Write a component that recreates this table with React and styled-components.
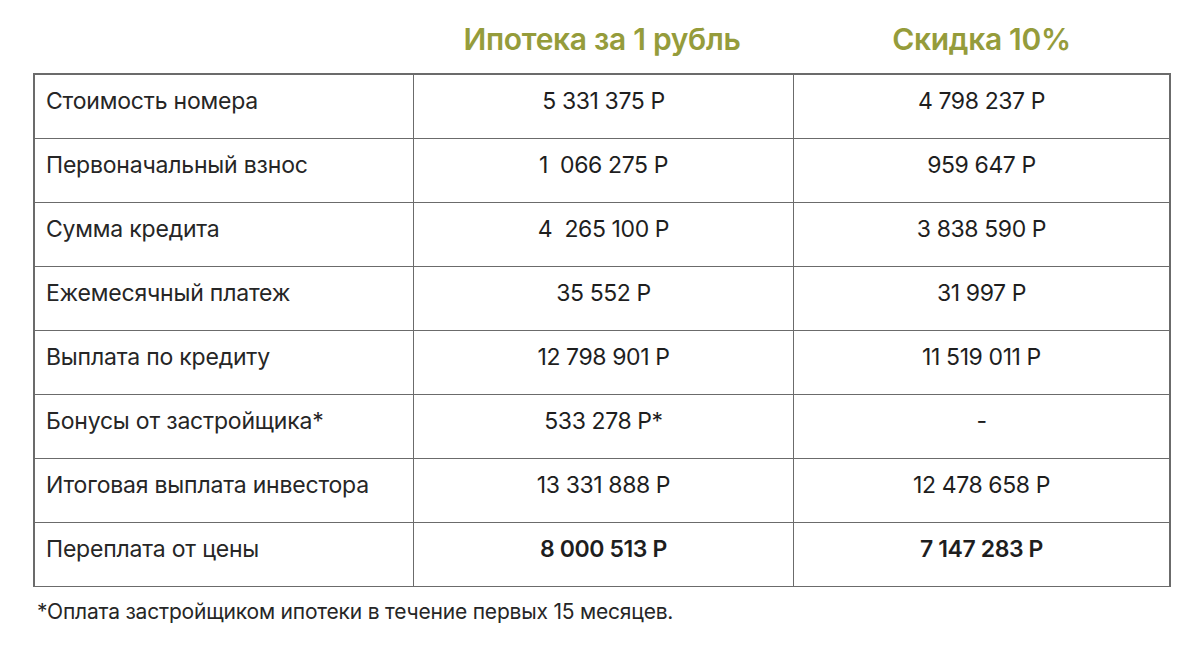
import React from "react";
import styled, { createGlobalStyle } from "styled-components";

const GlobalStyle = createGlobalStyle`
  body {
    margin: 0;
    background: #ffffff;
    font-family: "Inter", "Noto Sans", sans-serif;
    color: #2b2b2b;
  }
`;

const rows = [
  ["Стоимость номера", "5 331 375 Р", "4 798 237 Р"],
  ["Первоначальный взнос", "1  066 275 Р", "959 647 Р"],
  ["Сумма кредита", "4  265 100 Р", "3 838 590 Р"],
  ["Ежемесячный платеж", "35 552 Р", "31 997 Р"],
  ["Выплата по кредиту", "12 798 901 Р", "11 519 011 Р"],
  ["Бонусы от застройщика*", "533 278 Р*", "-"],
  ["Итоговая выплата инвестора", "13 331 888 Р", "12 478 658 Р"],
];

const App = () => {
  return (
    <Page>
      <GlobalStyle />
      <Header>
        <span />
        <Title>Ипотека за 1 рубль</Title>
        <Title>Скидка 10%</Title>
      </Header>
      <Table>
        {rows.map((r) => (
          <Row key={r[0]}>
            <Label>{r[0]}</Label>
            <Value>{r[1]}</Value>
            <Value>{r[2]}</Value>
          </Row>
        ))}
        <Row>
          <Label>Переплата от цены</Label>
          <Value bold>8 000 513 Р</Value>
          <Value bold>7 147 283 Р</Value>
        </Row>
      </Table>
      <Note>*Оплата застройщиком ипотеки в течение первых 15 месяцев.</Note>
    </Page>
  );
};

const Page = styled.div`
  width: 1200px;
  height: 665px;
  padding: 16px 28px 0 33px;
  box-sizing: border-box;
`;

const Header = styled.div`
  display: grid;
  grid-template-columns: 379px 380px 379px;
  height: 57px;
  align-items: start;
`;

const Title = styled.div`
  text-align: center;
  color: #959c3b;
  font-size: 30px;
  font-weight: 600;
  letter-spacing: -0.3px;
  line-height: 46px;
`;

const Table = styled.div`
  width: 1138px;
  border: 2px solid #6b6b6b;
  border-bottom-width: 1.5px;
  box-sizing: border-box;
`;

const Row = styled.div`
  display: grid;
  grid-template-columns: 378px 380px 1fr;
  height: 64px;
  box-sizing: border-box;
  border-bottom: 1px solid #6b6b6b;
  &:last-child {
    border-bottom: none;
    height: 63px;
  }
  & > div + div {
    border-left: 1px solid #6b6b6b;
  }
`;

const Label = styled.div`
  display: flex;
  align-items: center;
  padding: 0 0 11px 11px;
  font-size: 23px;
  letter-spacing: -0.2px;
  color: #262626;
`;

const Value = styled.div`
  display: flex;
  align-items: center;
  justify-content: center;
  padding-bottom: 11px;
  font-size: 23px;
  letter-spacing: -0.4px;
  white-space: pre;
  font-weight: ${(p) => (p.bold ? 600 : 400)};
  color: #1e1e1e;
`;

const Note = styled.div`
  margin-top: 12px;
  padding-left: 4px;
  font-size: 21px;
  letter-spacing: -0.2px;
  color: #262626;
`;

export default App;
